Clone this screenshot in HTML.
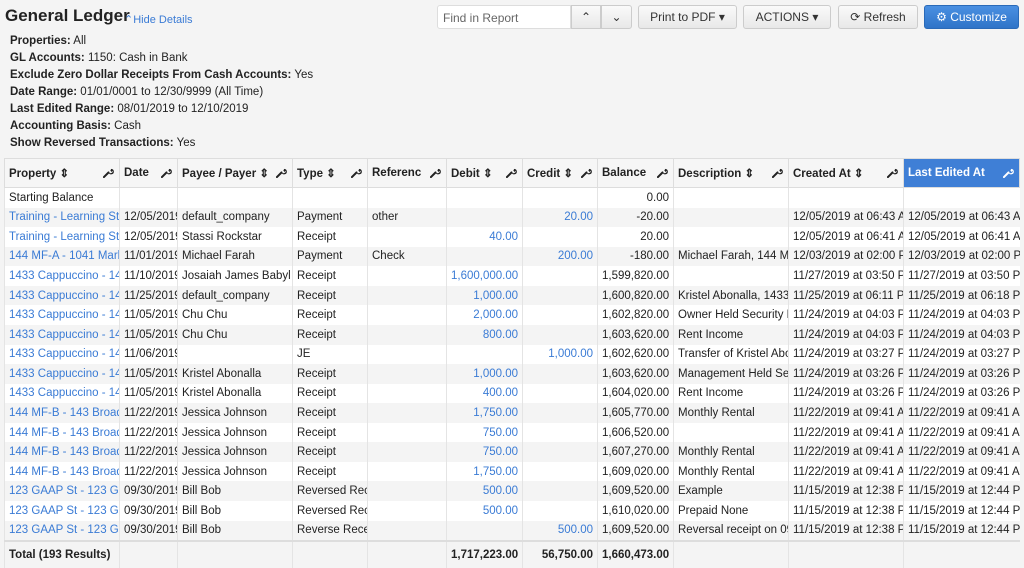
<!DOCTYPE html><html><head><style>
body{margin:0;width:1024px;height:568px;overflow:hidden;background:#f4f4f4;font-family:"Liberation Sans",sans-serif;font-size:11.5px;color:#222}
.t{position:absolute;left:5px;top:6px;font-size:17px;font-weight:bold;color:#222}
.hd{position:absolute;left:124px;top:13px;font-size:11px;color:#3a7bd5}
.meta{position:absolute;left:10px;top:33px;line-height:17px;font-size:11.5px}
.find{position:absolute;left:437px;top:5px;width:134px;height:24px;background:#fff;border:1px solid #ddd;border-radius:3px 0 0 3px;color:#666;line-height:24px;padding-left:5px;box-sizing:border-box;font-size:12px}
.btn{position:absolute;top:5px;height:24px;box-sizing:border-box;border:1px solid #ccc;border-radius:3px;background:linear-gradient(#fafafa,#e8e8e8);text-align:center;line-height:22px;font-size:12px;color:#333}
.blue{background:linear-gradient(#4a90e2,#2f74c8);border-color:#2a6ab8;color:#fff}
table{position:absolute;left:4px;top:158px;border-collapse:collapse;table-layout:fixed;width:1015px;background:#fff}
td,th{white-space:nowrap;overflow:hidden;padding:0 4px;height:19.57px;border-left:1px solid #e4e4e4;font-size:11.5px;text-align:left;vertical-align:middle}
th{height:28px;font-weight:bold;background:#f6f6f6;border:1px solid #ddd;font-size:11.5px;position:relative}
th.a{background:#3f7fd6;color:#fff}
tr:nth-child(odd) td{background:#f4f4f4}
.l{color:#3a7bd5}.r{text-align:right}
tr.tot td{height:26px;font-weight:bold;background:#f4f4f4;border-top:2px solid #ddd}
.w{position:absolute;right:5px;top:8px;width:11px;height:11px}
</style></head><body>
<svg width="0" height="0" style="position:absolute"><symbol id="wr" viewBox="0 0 12 12"><path d="M1 11 L6 6" stroke="currentColor" stroke-width="2.2" stroke-linecap="round"/><path d="M6 6 A3 3 0 1 0 9 2 L8 4 L9.5 5.5 L11 4 A3 3 0 0 1 6 6Z" fill="currentColor"/></symbol></svg>
<div class="t">General Ledger</div><div class="hd">⌃Hide Details</div>
<div class="meta"><b>Properties:</b> All<br><b>GL Accounts:</b> 1150: Cash in Bank<br><b>Exclude Zero Dollar Receipts From Cash Accounts:</b> Yes<br><b>Date Range:</b> 01/01/0001 to 12/30/9999 (All Time)<br><b>Last Edited Range:</b> 08/01/2019 to 12/10/2019<br><b>Accounting Basis:</b> Cash<br><b>Show Reversed Transactions:</b> Yes</div>
<div class="find">Find in Report</div>
<div class="btn" style="left:571px;width:30px;border-radius:0">⌃</div>
<div class="btn" style="left:601px;width:31px;border-radius:0 3px 3px 0">⌄</div>
<div class="btn" style="left:638px;width:99px">Print to PDF ▾</div>
<div class="btn" style="left:743px;width:88px">ACTIONS ▾</div>
<div class="btn" style="left:838px;width:80px">⟳ Refresh</div>
<div class="btn blue" style="left:924px;width:95px">⚙ Customize</div>
<table>
<colgroup><col style="width:115px"><col style="width:58px"><col style="width:115px"><col style="width:75px"><col style="width:79px"><col style="width:76px"><col style="width:75px"><col style="width:76px"><col style="width:115px"><col style="width:115px"><col style="width:116px"></colgroup>
<tr><th>Property ⇕<svg class="w"><use href="#wr"/></svg></th><th>Date <svg class="w"><use href="#wr"/></svg></th><th>Payee / Payer ⇕<svg class="w"><use href="#wr"/></svg></th><th>Type ⇕<svg class="w"><use href="#wr"/></svg></th><th>Referenc<svg class="w"><use href="#wr"/></svg></th><th>Debit ⇕<svg class="w"><use href="#wr"/></svg></th><th>Credit ⇕<svg class="w"><use href="#wr"/></svg></th><th>Balance<svg class="w"><use href="#wr"/></svg></th><th>Description ⇕<svg class="w"><use href="#wr"/></svg></th><th>Created At ⇕<svg class="w"><use href="#wr"/></svg></th><th class="a">Last Edited At<svg class="w"><use href="#wr"/></svg></th></tr>
<tr><td>Starting Balance</td><td></td><td></td><td></td><td></td><td></td><td></td><td class="r">0.00</td><td></td><td></td><td></td></tr>
<tr><td class="l">Training - Learning St</td><td>12/05/2019</td><td>default_company</td><td>Payment</td><td>other</td><td></td><td class="r l">20.00</td><td class="r">-20.00</td><td></td><td>12/05/2019 at 06:43 AM</td><td>12/05/2019 at 06:43 AM</td></tr>
<tr><td class="l">Training - Learning St</td><td>12/05/2019</td><td>Stassi Rockstar</td><td>Receipt</td><td></td><td class="r l">40.00</td><td></td><td class="r">20.00</td><td></td><td>12/05/2019 at 06:41 AM</td><td>12/05/2019 at 06:41 AM</td></tr>
<tr><td class="l">144 MF-A - 1041 Marl</td><td>11/01/2019</td><td>Michael Farah</td><td>Payment</td><td>Check</td><td></td><td class="r l">200.00</td><td class="r">-180.00</td><td>Michael Farah, 144 M</td><td>12/03/2019 at 02:00 PM</td><td>12/03/2019 at 02:00 PM</td></tr>
<tr><td class="l">1433 Cappuccino - 14</td><td>11/10/2019</td><td>Josaiah James Babyl</td><td>Receipt</td><td></td><td class="r l">1,600,000.00</td><td></td><td class="r">1,599,820.00</td><td></td><td>11/27/2019 at 03:50 PM</td><td>11/27/2019 at 03:50 PM</td></tr>
<tr><td class="l">1433 Cappuccino - 14</td><td>11/25/2019</td><td>default_company</td><td>Receipt</td><td></td><td class="r l">1,000.00</td><td></td><td class="r">1,600,820.00</td><td>Kristel Abonalla, 1433</td><td>11/25/2019 at 06:11 PM</td><td>11/25/2019 at 06:18 PM</td></tr>
<tr><td class="l">1433 Cappuccino - 14</td><td>11/05/2019</td><td>Chu Chu</td><td>Receipt</td><td></td><td class="r l">2,000.00</td><td></td><td class="r">1,602,820.00</td><td>Owner Held Security D</td><td>11/24/2019 at 04:03 PM</td><td>11/24/2019 at 04:03 PM</td></tr>
<tr><td class="l">1433 Cappuccino - 14</td><td>11/05/2019</td><td>Chu Chu</td><td>Receipt</td><td></td><td class="r l">800.00</td><td></td><td class="r">1,603,620.00</td><td>Rent Income</td><td>11/24/2019 at 04:03 PM</td><td>11/24/2019 at 04:03 PM</td></tr>
<tr><td class="l">1433 Cappuccino - 14</td><td>11/06/2019</td><td></td><td>JE</td><td></td><td></td><td class="r l">1,000.00</td><td class="r">1,602,620.00</td><td>Transfer of Kristel Abo</td><td>11/24/2019 at 03:27 PM</td><td>11/24/2019 at 03:27 PM</td></tr>
<tr><td class="l">1433 Cappuccino - 14</td><td>11/05/2019</td><td>Kristel Abonalla</td><td>Receipt</td><td></td><td class="r l">1,000.00</td><td></td><td class="r">1,603,620.00</td><td>Management Held Sec</td><td>11/24/2019 at 03:26 PM</td><td>11/24/2019 at 03:26 PM</td></tr>
<tr><td class="l">1433 Cappuccino - 14</td><td>11/05/2019</td><td>Kristel Abonalla</td><td>Receipt</td><td></td><td class="r l">400.00</td><td></td><td class="r">1,604,020.00</td><td>Rent Income</td><td>11/24/2019 at 03:26 PM</td><td>11/24/2019 at 03:26 PM</td></tr>
<tr><td class="l">144 MF-B - 143 Broad</td><td>11/22/2019</td><td>Jessica Johnson</td><td>Receipt</td><td></td><td class="r l">1,750.00</td><td></td><td class="r">1,605,770.00</td><td>Monthly Rental</td><td>11/22/2019 at 09:41 AM</td><td>11/22/2019 at 09:41 AM</td></tr>
<tr><td class="l">144 MF-B - 143 Broad</td><td>11/22/2019</td><td>Jessica Johnson</td><td>Receipt</td><td></td><td class="r l">750.00</td><td></td><td class="r">1,606,520.00</td><td></td><td>11/22/2019 at 09:41 AM</td><td>11/22/2019 at 09:41 AM</td></tr>
<tr><td class="l">144 MF-B - 143 Broad</td><td>11/22/2019</td><td>Jessica Johnson</td><td>Receipt</td><td></td><td class="r l">750.00</td><td></td><td class="r">1,607,270.00</td><td>Monthly Rental</td><td>11/22/2019 at 09:41 AM</td><td>11/22/2019 at 09:41 AM</td></tr>
<tr><td class="l">144 MF-B - 143 Broad</td><td>11/22/2019</td><td>Jessica Johnson</td><td>Receipt</td><td></td><td class="r l">1,750.00</td><td></td><td class="r">1,609,020.00</td><td>Monthly Rental</td><td>11/22/2019 at 09:41 AM</td><td>11/22/2019 at 09:41 AM</td></tr>
<tr><td class="l">123 GAAP St - 123 G</td><td>09/30/2019</td><td>Bill Bob</td><td>Reversed Rec</td><td></td><td class="r l">500.00</td><td></td><td class="r">1,609,520.00</td><td>Example</td><td>11/15/2019 at 12:38 PM</td><td>11/15/2019 at 12:44 PM</td></tr>
<tr><td class="l">123 GAAP St - 123 G</td><td>09/30/2019</td><td>Bill Bob</td><td>Reversed Rec</td><td></td><td class="r l">500.00</td><td></td><td class="r">1,610,020.00</td><td>Prepaid None</td><td>11/15/2019 at 12:38 PM</td><td>11/15/2019 at 12:44 PM</td></tr>
<tr><td class="l">123 GAAP St - 123 G</td><td>09/30/2019</td><td>Bill Bob</td><td>Reverse Rece</td><td></td><td></td><td class="r l">500.00</td><td class="r">1,609,520.00</td><td>Reversal receipt on 09</td><td>11/15/2019 at 12:38 PM</td><td>11/15/2019 at 12:44 PM</td></tr>
<tr class="tot"><td>Total (193 Results)</td><td></td><td></td><td></td><td></td><td class="r">1,717,223.00</td><td class="r">56,750.00</td><td class="r">1,660,473.00</td><td></td><td></td><td></td></tr>
</table>
</body></html>
